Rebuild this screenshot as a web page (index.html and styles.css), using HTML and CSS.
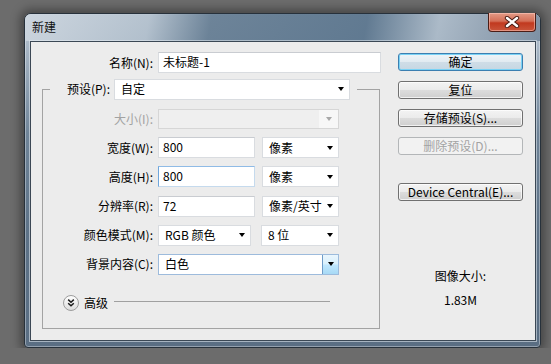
FILE: index.html
```html
<!DOCTYPE html>
<html>
<head>
<meta charset="UTF-8">
<title>新建</title>
<link rel="stylesheet" href="styles.css">
</head>
<body>

<div class="window">
	<div class="titlebar">
		<span class="title">新建</span>
		<div class="close-btn">
			<svg width="16" height="12" viewBox="0 0 16 12">
				<path d="M3 2 L13 10 M13 2 L3 10" stroke="#4a1c14" stroke-width="4.4" stroke-linecap="round"/>
				<path d="M3 2 L13 10 M13 2 L3 10" stroke="#fff" stroke-width="2.4" stroke-linecap="round"/>
			</svg>
		</div>
	</div>

	<div class="client">
		<!-- Left: document settings -->
		<div class="form-col">
			<div class="name-row">
				<span class="lbl name-lbl">名称(N):</span>
				<div class="textbox name-box">未标题-1</div>
			</div>

			<fieldset class="group">
				<legend class="group-legend">
					<div class="legend-inner">
						<span class="lbl preset-lbl">预设(P):</span>
						<div class="dropdown preset-box"><span class="value">自定</span><span class="arrow"></span></div>
					</div>
				</legend>

				<div class="field-row">
					<span class="lbl disabled">大小(I):</span>
					<div class="dropdown ctrl full disabled-box"><span class="value"></span><span class="arrow-area"><span class="arrow"></span></span></div>
				</div>
				<div class="field-row">
					<span class="lbl">宽度(W):</span>
					<div class="textbox ctrl num-box">800</div>
					<div class="dropdown unit-box"><span class="value">像素</span><span class="arrow"></span></div>
				</div>
				<div class="field-row">
					<span class="lbl">高度(H):</span>
					<div class="textbox ctrl num-box focused">800</div>
					<div class="dropdown unit-box"><span class="value">像素</span><span class="arrow"></span></div>
				</div>
				<div class="field-row">
					<span class="lbl">分辨率(R):</span>
					<div class="textbox ctrl num-box">72</div>
					<div class="dropdown unit-box"><span class="value">像素/英寸</span><span class="arrow"></span></div>
				</div>
				<div class="field-row">
					<span class="lbl">颜色模式(M):</span>
					<div class="dropdown ctrl mode-box"><span class="value">RGB 颜色</span><span class="arrow"></span></div>
					<div class="dropdown bits-box"><span class="value">8 位</span><span class="arrow"></span></div>
				</div>
				<div class="field-row">
					<span class="lbl">背景内容(C):</span>
					<div class="dropdown ctrl full aero-box"><span class="value">白色</span><span class="aero-btn"><span class="arrow"></span></span></div>
				</div>

				<div class="advanced-row">
					<svg class="adv-icon" width="16" height="16" viewBox="0 0 16 16">
						<defs>
							<linearGradient id="advFill" x1="0" y1="0" x2="0" y2="1">
								<stop offset="0" stop-color="#ffffff"/>
								<stop offset="1" stop-color="#dcdcdc"/>
							</linearGradient>
						</defs>
						<circle cx="8" cy="8" r="7.5" fill="url(#advFill)" stroke="#9c9c9c"/>
						<polyline points="5.2,4.6 8,7.2 10.8,4.6" fill="none" stroke="#1a1a1a" stroke-width="1.5"/>
						<polyline points="5.2,8.2 8,10.8 10.8,8.2" fill="none" stroke="#1a1a1a" stroke-width="1.5"/>
					</svg>
					<span class="adv-label">高级</span>
					<div class="adv-line"></div>
				</div>
			</fieldset>
		</div>

		<!-- Right: buttons and image size -->
		<div class="button-col">
			<div class="btn btn-default">确定</div>
			<div class="btn">复位</div>
			<div class="btn">存储预设(S)...</div>
			<div class="btn btn-disabled">删除预设(D)...</div>
			<div class="btn btn-device">Device Central(E)...</div>
			<div class="size-info">
				<p>图像大小:</p>
				<p class="size-value">1.83M</p>
			</div>
		</div>
	</div>
</div>

</body>
</html>
```

FILE: styles.css
```css
/* *** Page *** */
* {
	box-sizing: border-box;
}

body {
	margin: 0;
	padding: 13px 0 0 24px;
	background: #6c6c6c;
	font-family: "Noto Sans CJK SC", "Liberation Sans", sans-serif;
	font-size: 12px;
	line-height: 16px;
	color: #000;
}

p {
	margin: 0;
}

/* *** Window frame *** */
.window {
	width: 517px;
	height: 335px;
	border: 1px solid #27313b;
	border-radius: 7px 7px 4px 4px;
	padding: 0 4px 6px 5px;
	display: flex;
	flex-direction: column;
	background: linear-gradient(#c3cdd8 0, #a3b2c1 40px, #6f8498 120px, #5d7287 220px, #5a6e83 100%);
	box-shadow: 0 0 10px 4px rgba(0, 0, 0, 0.35), inset 0 0 0 1px rgba(255, 255, 255, 0.35);
}

.titlebar {
	height: 27px;
	margin: 0 -4px 0 -5px;
	padding: 0 4px 0 6px;
	display: flex;
	align-items: flex-start;
	border-radius: 6px 6px 0 0;
	background: linear-gradient(100deg, rgba(205, 214, 223, 0.9) 0, rgba(178, 192, 205, 0.8) 24%, rgba(100, 124, 146, 0.9) 36%, rgba(92, 118, 142, 0.95) 66%, rgba(170, 185, 199, 0.9) 80%, rgba(150, 166, 182, 0.9) 88%, rgba(120, 140, 160, 0.9) 100%);
}

.title {
	padding: 5px 0 0 1px;
	color: #111;
}

.close-btn {
	margin-left: auto;
	margin-top: -1px;
	width: 48px;
	height: 19px;
	border: 1px solid #4b1d16;
	border-top: none;
	border-radius: 0 0 4px 4px;
	background: linear-gradient(#e39a86 0, #d46f57 45%, #c1391f 55%, #c9553b 100%);
	box-shadow: inset 0 0 0 1px rgba(255, 210, 200, 0.5);
	display: flex;
	align-items: center;
	justify-content: center;
}

.client {
	flex: 1;
	display: flex;
	background: #ececec;
	border: 1px solid #3b4855;
	box-shadow: 0 0 0 1px rgba(230, 236, 242, 0.55);
}

/* *** Form column *** */
.form-col {
	width: 350px;
	padding-top: 10px;
}

.lbl {
	text-align: right;
	white-space: nowrap;
}

.lbl.disabled {
	color: #a2a2a2;
}

.name-row {
	display: flex;
	align-items: center;
	height: 21px;
}

.name-lbl {
	width: 122px;
}

.textbox {
	height: 21px;
	background: #fff;
	border: 1px solid #d9dce0;
	border-top-color: #c9ccd1;
	padding: 1px 0 0 4px;
	white-space: nowrap;
}

.textbox.focused {
	border-color: #8fbbe6 #c5daed #c5daed #6fa6dc;
}

.name-box {
	margin-left: 5px;
	width: 223px;
}

.group {
	margin: 6px 0 0 11px;
	width: 338px;
	min-width: 0;
	border: 1px solid #a3a3a3;
	padding: 9px 0 17px 7px;
}

.group-legend {
	padding: 0 7px 0 0;
}

.legend-inner {
	display: flex;
	align-items: center;
	height: 20px;
}

.preset-lbl {
	width: 60px;
}

.preset-box {
	margin-left: 4px;
	width: 236px;
	height: 20px;
}

.field-row {
	display: flex;
	align-items: center;
	height: 21px;
	margin-bottom: 8.2px;
}

.field-row .lbl {
	width: 103px;
}

.ctrl {
	margin-left: 5px;
}

.full {
	width: 181px;
}

.num-box {
	width: 97px;
}

.unit-box {
	margin-left: 7px;
	width: 77px;
}

.mode-box {
	width: 93px;
}

.bits-box {
	margin-left: 10px;
	width: 78px;
}

/* *** Drop-down lists *** */
.dropdown {
	display: flex;
	align-items: center;
	height: 21px;
	background: #fff;
	border: 1px solid #d9dce0;
	padding-left: 6px;
	white-space: nowrap;
}

.dropdown .value {
	flex: 1;
}

.arrow {
	width: 0;
	height: 0;
	border-left: 3.5px solid transparent;
	border-right: 3.5px solid transparent;
	border-top: 4px solid #000;
	margin-right: 5px;
}

.disabled-box {
	height: 20px;
	background: #efefef;
	border-color: #d6d6d6;
	padding-right: 0;
	align-items: stretch;
}

.arrow-area {
	width: 19px;
	background: #f7f7f7;
	display: flex;
	align-items: center;
	justify-content: center;
}

.arrow-area .arrow {
	margin: 0;
	border-top-color: #a8a8a8;
}

.aero-box {
	border-color: #9dbbdc;
	align-items: stretch;
	padding-right: 0;
}

.aero-box .value {
	display: flex;
	align-items: center;
}

.aero-btn {
	width: 16px;
	border-left: 1px solid #6f9cc8;
	background: linear-gradient(#eaf6fd 0, #d9f0fc 45%, #bee6fd 55%, #a7d9f5 100%);
	display: flex;
	align-items: center;
	justify-content: center;
}

.aero-btn .arrow {
	margin: 0;
}

/* *** Advanced *** */
.advanced-row {
	display: flex;
	align-items: center;
	height: 16px;
	margin: 20px 0 0 13px;
}

.adv-label {
	margin-left: 5px;
}

.adv-line {
	margin-left: 6px;
	width: 216px;
	height: 1px;
	background: #a0a0a0;
	margin-top: -3px;
}

/* *** Buttons *** */
.button-col {
	margin-left: 17px;
	width: 125px;
	padding-top: 11px;
	display: flex;
	flex-direction: column;
	gap: 10px;
}

.btn {
	height: 18px;
	border: 1px solid #707070;
	border-radius: 3px;
	background: linear-gradient(#f3f3f3 0, #ebebeb 48%, #dcdcdc 52%, #cfcfcf 100%);
	box-shadow: inset 0 0 0 1px rgba(255, 255, 255, 0.7);
	text-align: center;
	line-height: 16px;
	white-space: nowrap;
}

.btn-default {
	border-color: #3c7fb1;
	background: linear-gradient(#eef4f8 0, #e2ebf1 48%, #cfdde7 52%, #c6d7e3 100%);
	box-shadow: inset 0 0 0 1px #79d2f5;
}

.btn-disabled {
	border-color: #b3b6b8;
	background: #f2f2f2;
	box-shadow: none;
	color: #a3a3a3;
}

.btn-device {
	margin-top: 18px;
}

.size-info {
	margin-top: 57px;
	text-align: center;
}

.size-value {
	margin-top: 8px;
}
```
